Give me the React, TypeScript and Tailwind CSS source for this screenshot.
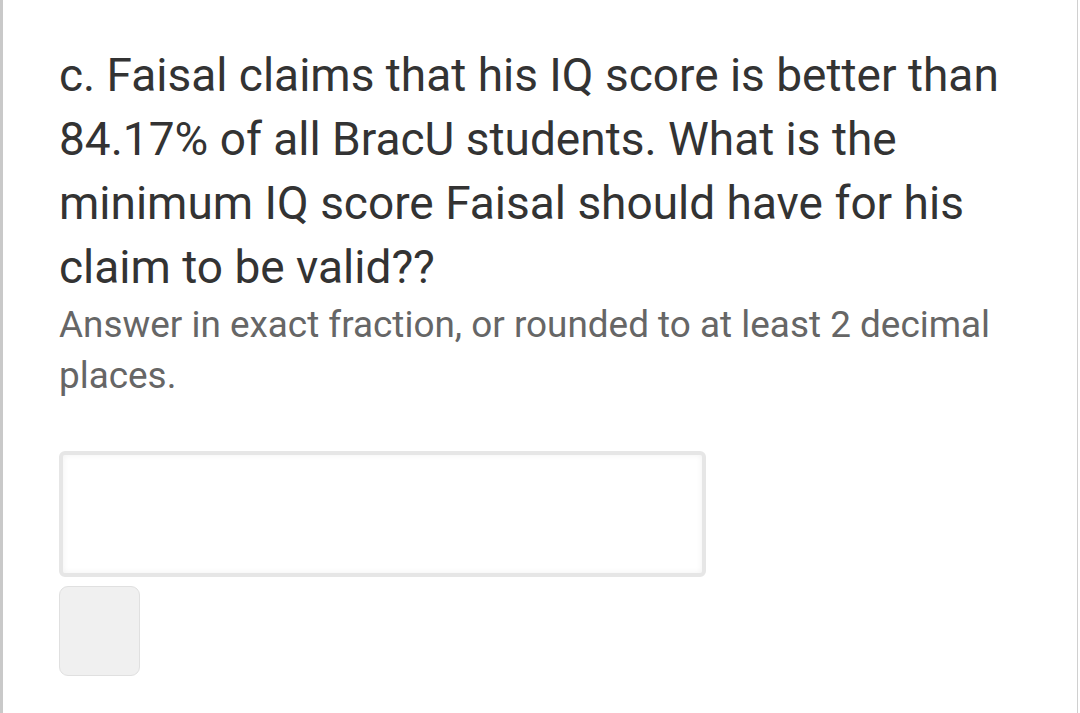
export default function App() {
  return (
    <div className="h-[713px] w-[1080px] overflow-hidden bg-white flex">
      <div className="w-[3px] bg-[#c9c9c9]" />
      <div className="flex-1 pl-[56px] pt-[43px] pr-[40px] font-['Roboto',sans-serif]">
        <p className="text-[46px] leading-[64px] text-[#333333]">
          c. Faisal claims that his IQ score is better than 84.17% of all BracU students. What is the minimum IQ score Faisal should have for his claim to be valid??
        </p>
        <p className="text-[36.9px] leading-[51px] text-[#666666]">
          Answer in exact fraction, or rounded to at least 2 decimal places.
        </p>
        <div className="mt-[50px] w-[647px] h-[126px] rounded-[6px] border-[4px] border-[#e6e6e6] shadow-[inset_0_0_6px_rgba(0,0,0,0.06)]" />
        <div className="mt-[9px] w-[81px] h-[90px] rounded-[9px] border border-[#e0e0e0] bg-[#f0f0f0]" />
      </div>
      <div className="w-px bg-[#d0d0d0]" />
      <div className="w-[2px]" />
    </div>
  )
}
